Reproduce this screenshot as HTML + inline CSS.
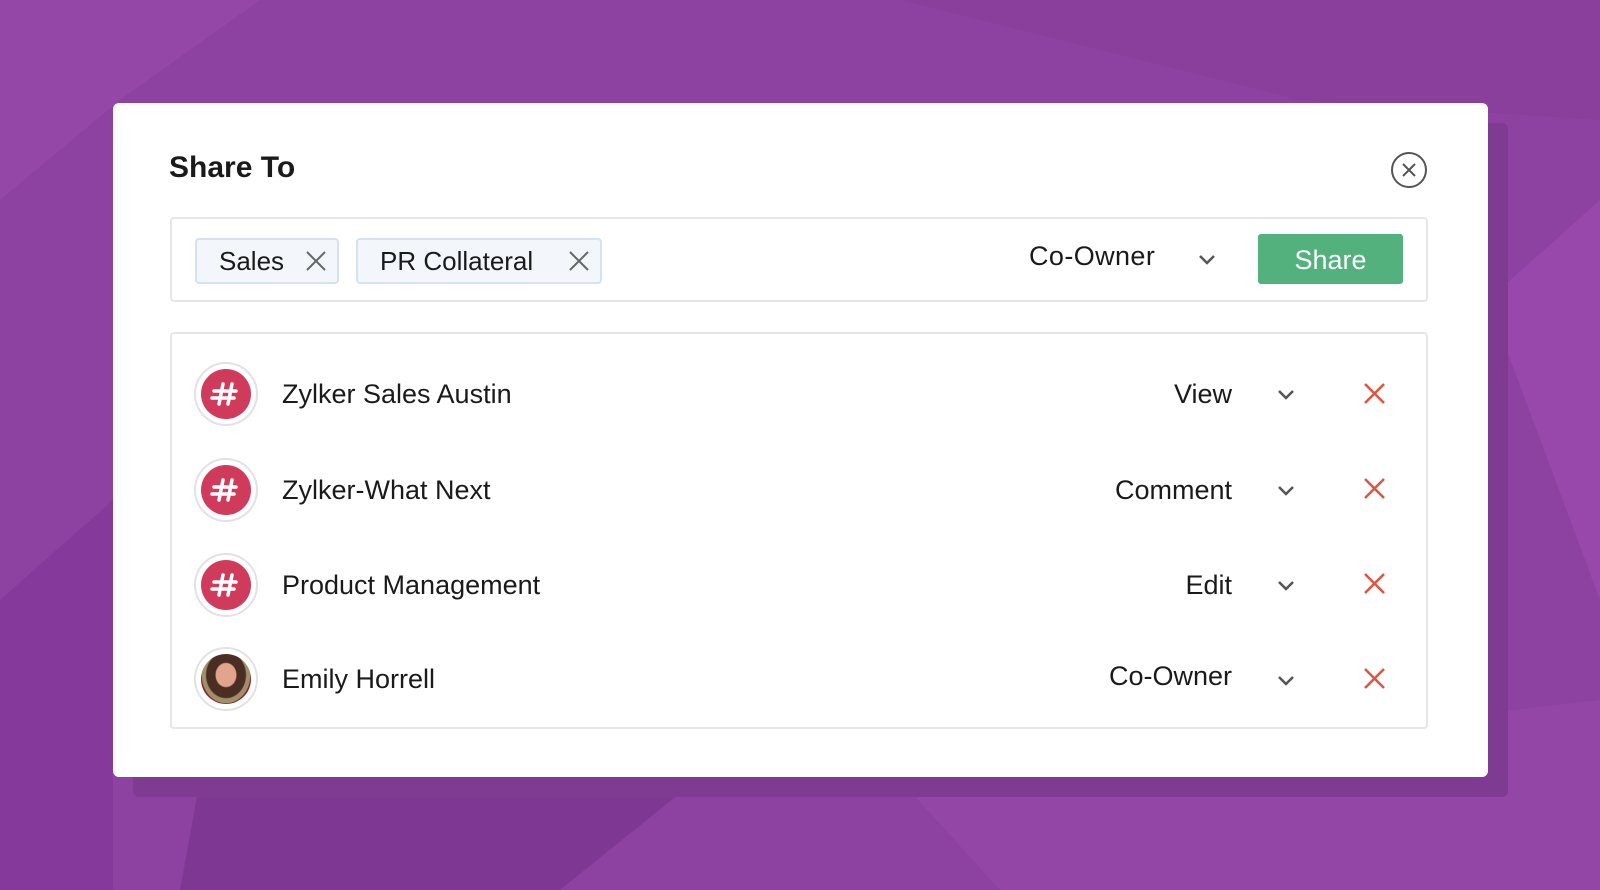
<!DOCTYPE html>
<html><head><meta charset="utf-8"><style>
*{margin:0;padding:0;box-sizing:border-box}
body{width:1600px;height:890px;overflow:hidden;background:#8d41a0;font-family:"Liberation Sans",sans-serif;position:relative;color:#1a1a1a}
.abs{position:absolute}
.modal{left:113px;top:103px;width:1375px;height:674px;background:#fff;border-radius:6px}
.box{border:2px solid #e6e6e6;border-radius:4px;background:#fff}
.chip{top:238px;height:46px;border:2px solid #d6e2f0;background:#f3f7fb;border-radius:4px;font-size:26px;line-height:42px;padding-left:22px}
.row{position:absolute;left:0;width:1600px;height:80px}
.av{position:absolute;left:194px;width:64px;height:64px;border-radius:50%;border:2px solid #e2e2e2;background:#fff}
.av i{position:absolute;left:5px;top:5px;width:50px;height:50px;border-radius:50%;background:#d03a5b;display:block}
.name{position:absolute;left:282px;font-size:27px}
.perm{position:absolute;right:368px;font-size:27px;text-align:right}
</style></head><body>
<svg class="abs" style="left:0;top:0" width="1600" height="890">
<polygon points="0,0 260,0 120,100 0,200" fill="#9447a6"/>
<polygon points="900,0 1600,0 1600,120 1300,100" fill="#8a3f9c"/>
<polygon points="0,600 113,500 113,890 0,890" fill="#85399a"/>
<polygon points="200,780 700,777 560,890 180,890" fill="#7f3794"/>
<polygon points="900,780 1600,700 1600,890 1000,890" fill="#9346a6"/>
<polygon points="1488,300 1600,200 1600,600" fill="#9848aa"/>
</svg>
<div class="abs" style="left:133px;top:123px;width:1375px;height:674px;background:#7f3a92;border-radius:6px"></div>
<div class="abs modal"></div>
<div class="abs" style="left:169px;top:151px;font-size:30px;font-weight:bold">Share To</div>
<svg class="abs" style="left:1390px;top:151px" width="38" height="38"><circle cx="19" cy="19" r="17" fill="none" stroke="#555" stroke-width="2"/><path d="M13 13L25 25M25 13L13 25" stroke="#555" stroke-width="2"/></svg>
<div class="abs box" style="left:170px;top:217px;width:1258px;height:85px"></div>
<div class="abs chip" style="left:195px;width:144px">Sales</div>
<svg class="abs" style="left:305px;top:250px" width="22" height="22"><path d="M2 2L20 20M20 2L2 20" stroke="#666" stroke-width="2"/></svg>
<div class="abs chip" style="left:356px;width:246px">PR Collateral</div>
<svg class="abs" style="left:568px;top:250px" width="22" height="22"><path d="M2 2L20 20M20 2L2 20" stroke="#666" stroke-width="2"/></svg>
<div class="abs" style="left:1029px;top:241px;font-size:27px;letter-spacing:0.4px">Co-Owner</div>
<svg class="abs" style="left:1198px;top:254px" width="18" height="12"><path d="M2 2L9 9L16 2" fill="none" stroke="#555" stroke-width="2.5"/></svg>
<div class="abs" style="left:1258px;top:234px;width:145px;height:50px;background:#52b17d;border-radius:3px;color:#fff;font-size:27px;text-align:center;line-height:52px">Share</div>
<div class="abs box" style="left:170px;top:332px;width:1258px;height:397px"></div>

<div class="row" style="top:354px"><div class="av" style="top:8px"><i></i></div><div class="name" style="top:25px">Zylker Sales Austin</div><div class="perm" style="top:25px">View</div></div>
<div class="row" style="top:450px"><div class="av" style="top:8px"><i></i></div><div class="name" style="top:25px">Zylker-What Next</div><div class="perm" style="top:25px">Comment</div></div>
<div class="row" style="top:545px"><div class="av" style="top:8px"><i></i></div><div class="name" style="top:25px">Product Management</div><div class="perm" style="top:25px">Edit</div></div>
<div class="row" style="top:639px"><div class="av" style="top:8px"><i style="background:radial-gradient(ellipse at 50% 42%,#e2a58c 0 28%,#4a2e24 31% 55%,#a0906a 58% 68%,#8a1a2a 70%)"></i></div><div class="name" style="top:25px">Emily Horrell</div><div class="perm" style="top:22px">Co-Owner</div></div>

<svg class="abs" style="left:0;top:0" width="1600" height="890">
<g fill="none" stroke="#fff" stroke-width="3.5" stroke-linecap="round">
<path d="M223 384l-4 20M232 384l-4 20M214 391h22M212 398h22"/>
<path d="M223 480l-4 20M232 480l-4 20M214 487h22M212 494h22"/>
<path d="M223 575l-4 20M232 575l-4 20M214 582h22M212 589h22"/>
</g>
<g fill="none" stroke="#555" stroke-width="2.5"><path d="M1279 391l7 7 7-7M1279 487l7 7 7-7M1279 582l7 7 7-7M1279 677l7 7 7-7"/></g>
<g stroke="#e0533f" stroke-width="2.5"><path d="M1365 384l19 19M1384 384l-19 19M1365 479l19 19M1384 479l-19 19M1365 574l19 19M1384 574l-19 19M1365 669l19 19M1384 669l-19 19"/></g>
</svg>
</body></html>
